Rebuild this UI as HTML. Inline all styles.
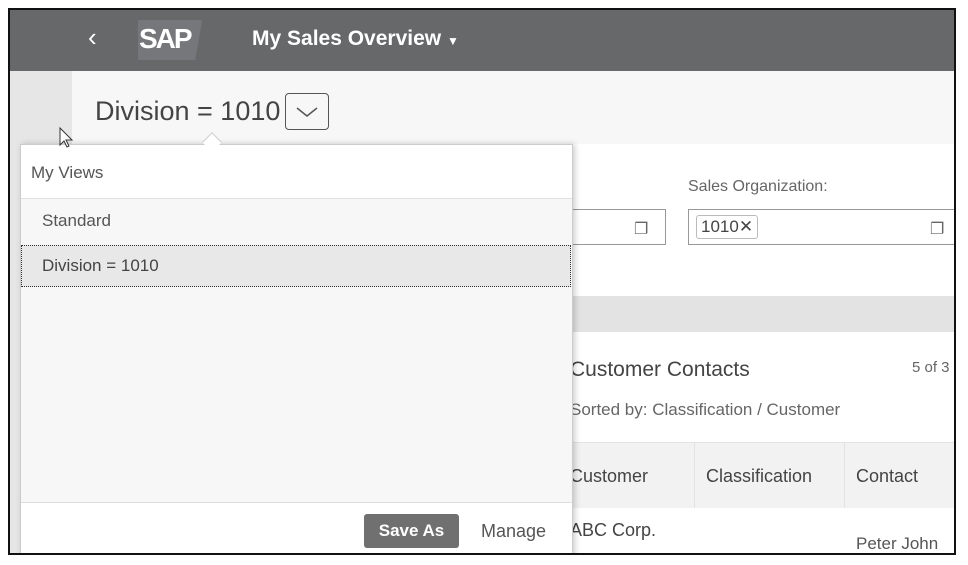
<!DOCTYPE html>
<html><head><style>
*{margin:0;padding:0;box-sizing:border-box}
body{width:968px;height:565px;background:#fff;position:relative;overflow:hidden;font-family:"Liberation Sans",sans-serif;color:#444}
.frame{position:absolute;left:8px;top:8px;width:948px;height:547px;border:2px solid #111;overflow:hidden;background:#f2f2f2}
.a{position:absolute}
</style></head><body>
<div class="frame">
 <div class="a" style="left:0;top:0;width:944px;height:61px;background:#67686a"></div>
 <div class="a" style="left:78px;top:12px;color:#fff;font-size:26px">&#8249;</div>
 <div class="a" style="left:128px;top:10px;width:84px;height:40px;background:linear-gradient(100deg,#75777a 70%,transparent 71%)"></div>
 <div class="a" style="left:129px;top:13px;color:#fff;font-weight:bold;font-size:28px;letter-spacing:-2px">SAP</div>
 <div class="a" style="left:242px;top:17px;color:#fff;font-weight:bold;font-size:21px">My Sales Overview <span style="font-size:12px">&#9660;</span></div>
 <div class="a" style="left:0;top:61px;width:62px;height:486px;background:#e6e6e6"></div>
 <div class="a" style="left:62px;top:61px;width:882px;height:73px;background:#f7f7f7"></div>
 <div class="a" style="left:85px;top:86px;font-size:27px;color:#444">Division = 1010</div>
 <div class="a" style="left:275px;top:83px;width:44px;height:37px;border:1px solid #555;border-radius:4px"><svg width="42" height="35"><path d="M11 14l10 8 10-8" stroke="#555" stroke-width="1.5" fill="none"/></svg></div>
 <div class="a" style="left:62px;top:134px;width:882px;height:152px;background:#fff"></div>
 <div class="a" style="left:678px;top:168px;font-size:16px;color:#666">Sales Organization:</div>
 <div class="a" style="left:530px;top:199px;width:126px;height:36px;border:1px solid #999;border-left:none;background:#fff"></div>
 <div class="a" style="left:624px;top:209px;font-size:16px;color:#666">&#10064;</div>
 <div class="a" style="left:678px;top:199px;width:270px;height:36px;border:1px solid #999;background:#fff"></div>
 <div class="a" style="left:686px;top:205px;height:24px;padding:0 4px;border:1px solid #bbb;border-radius:3px;font-size:17px;line-height:22px;color:#444">1010&#10005;</div>
 <div class="a" style="left:920px;top:209px;font-size:16px;color:#666">&#10064;</div>
 <div class="a" style="left:62px;top:286px;width:882px;height:36px;background:#e3e3e3"></div>
 <div class="a" style="left:62px;top:322px;width:882px;height:225px;background:#fff"></div>
 <div class="a" style="left:560px;top:348px;font-size:21px;color:#444">Customer Contacts</div>
 <div class="a" style="left:902px;top:349px;font-size:15px;color:#666">5 of 3</div>
 <div class="a" style="left:560px;top:390px;font-size:17px;color:#666">Sorted by: Classification / Customer</div>
 <div class="a" style="left:540px;top:432px;width:404px;height:66px;background:#f2f2f2;border-top:1px solid #e3e3e3"></div>
 <div class="a" style="left:684px;top:432px;width:1px;height:66px;background:#e3e3e3"></div>
 <div class="a" style="left:834px;top:432px;width:1px;height:66px;background:#e3e3e3"></div>
 <div class="a" style="left:560px;top:456px;font-size:18px;color:#444">Customer</div>
 <div class="a" style="left:696px;top:456px;font-size:18px;color:#444">Classification</div>
 <div class="a" style="left:846px;top:456px;font-size:18px;color:#444">Contact</div>
 <div class="a" style="left:560px;top:510px;font-size:18px;color:#444">ABC Corp.</div>
 <div class="a" style="left:846px;top:524px;font-size:17px;color:#555">Peter John</div>
 <div class="a" style="left:10px;top:134px;width:553px;height:420px;background:#fff;border:1px solid #ccc;box-shadow:2px 0 6px rgba(0,0,0,.2)"></div>
 <div class="a" style="left:195px;top:125px;width:14px;height:14px;background:#fff;border-left:1px solid #ccc;border-top:1px solid #ccc;transform:rotate(45deg)"></div>
 <div class="a" style="left:21px;top:153px;font-size:17px;color:#555">My Views</div>
 <div class="a" style="left:11px;top:188px;width:551px;height:305px;background:#f7f7f7;border-top:1px solid #e0e0e0;border-bottom:1px solid #ddd"></div>
 <div class="a" style="left:32px;top:201px;font-size:17px;color:#555">Standard</div>
 <div class="a" style="left:11px;top:235px;width:550px;height:42px;background:#e8e8e8;border:1px dotted #333"></div>
 <div class="a" style="left:32px;top:246px;font-size:17px;color:#444">Division = 1010</div>
 <div class="a" style="left:354px;top:504px;width:95px;height:34px;background:#707070;border-radius:3px;color:#fff;font-weight:bold;font-size:17px;text-align:center;line-height:34px">Save As</div>
 <div class="a" style="left:471px;top:511px;font-size:18px;color:#555">Manage</div>
 <svg class="a" style="left:48px;top:116px" width="16" height="24"><path d="M2 2v17l4-4 3 6 2-1-3-6h6z" fill="#fff" stroke="#333"/></svg>
</div>
</body></html>
